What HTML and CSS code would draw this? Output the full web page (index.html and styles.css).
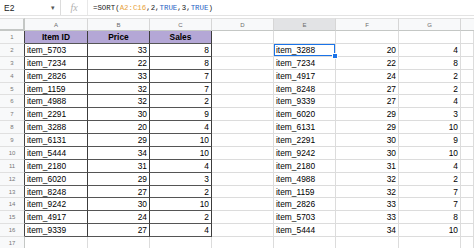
FILE: index.html
```html
<!DOCTYPE html>
<html lang="en">
<head>
    <meta charset="utf-8">
    <link rel="stylesheet" href="styles.css">
</head>
<body>
<div class="fbar">
    <div class="namebox">E2<span class="drop">&#9662;</span></div>
    <div class="fx">fx</div>
    <div class="formula">=SORT(<span class="ref">A2:C16</span>,2,<span class="kw">TRUE</span>,3,<span class="kw">TRUE</span>)</div>
</div>
<div class="sheet">
    <!-- column headers -->
    <div class="corner"></div>
    <div class="ch">A</div><div class="ch">B</div><div class="ch">C</div><div class="ch">D</div>
    <div class="ch on">E</div><div class="ch">F</div><div class="ch">G</div><div class="ch last"></div>

    <div class="rh tb">1</div>
    <div class="c t hd">Item ID</div><div class="c t hd">Price</div><div class="c t hd">Sales</div>
    <div class="c"></div><div class="c"></div><div class="c"></div><div class="c"></div><div class="c"></div>

    <div class="rh tb">2</div>
    <div class="c t">item_5703</div><div class="c t n">33</div><div class="c t n">8</div>
    <div class="c"></div><div class="c sel">item_3288</div><div class="c n">20</div><div class="c n">4</div><div class="c"></div>

    <div class="rh tb">3</div>
    <div class="c t">item_7234</div><div class="c t n">22</div><div class="c t n">8</div>
    <div class="c"></div><div class="c">item_7234</div><div class="c n">22</div><div class="c n">8</div><div class="c"></div>

    <div class="rh tb">4</div>
    <div class="c t">item_2826</div><div class="c t n">33</div><div class="c t n">7</div>
    <div class="c"></div><div class="c">item_4917</div><div class="c n">24</div><div class="c n">2</div><div class="c"></div>

    <div class="rh tb">5</div>
    <div class="c t">item_1159</div><div class="c t n">32</div><div class="c t n">7</div>
    <div class="c"></div><div class="c">item_8248</div><div class="c n">27</div><div class="c n">2</div><div class="c"></div>

    <div class="rh tb">6</div>
    <div class="c t">item_4988</div><div class="c t n">32</div><div class="c t n">2</div>
    <div class="c"></div><div class="c">item_9339</div><div class="c n">27</div><div class="c n">4</div><div class="c"></div>

    <div class="rh tb">7</div>
    <div class="c t">item_2291</div><div class="c t n">30</div><div class="c t n">9</div>
    <div class="c"></div><div class="c">item_6020</div><div class="c n">29</div><div class="c n">3</div><div class="c"></div>

    <div class="rh tb">8</div>
    <div class="c t">item_3288</div><div class="c t n">20</div><div class="c t n">4</div>
    <div class="c"></div><div class="c">item_6131</div><div class="c n">29</div><div class="c n">10</div><div class="c"></div>

    <div class="rh tb">9</div>
    <div class="c t">item_6131</div><div class="c t n">29</div><div class="c t n">10</div>
    <div class="c"></div><div class="c">item_2291</div><div class="c n">30</div><div class="c n">9</div><div class="c"></div>

    <div class="rh tb">10</div>
    <div class="c t">item_5444</div><div class="c t n">34</div><div class="c t n">10</div>
    <div class="c"></div><div class="c">item_9242</div><div class="c n">30</div><div class="c n">10</div><div class="c"></div>

    <div class="rh tb">11</div>
    <div class="c t">item_2180</div><div class="c t n">31</div><div class="c t n">4</div>
    <div class="c"></div><div class="c">item_2180</div><div class="c n">31</div><div class="c n">4</div><div class="c"></div>

    <div class="rh tb">12</div>
    <div class="c t">item_6020</div><div class="c t n">29</div><div class="c t n">3</div>
    <div class="c"></div><div class="c">item_4988</div><div class="c n">32</div><div class="c n">2</div><div class="c"></div>

    <div class="rh tb">13</div>
    <div class="c t">item_8248</div><div class="c t n">27</div><div class="c t n">2</div>
    <div class="c"></div><div class="c">item_1159</div><div class="c n">32</div><div class="c n">7</div><div class="c"></div>

    <div class="rh tb">14</div>
    <div class="c t">item_9242</div><div class="c t n">30</div><div class="c t n">10</div>
    <div class="c"></div><div class="c">item_2826</div><div class="c n">33</div><div class="c n">7</div><div class="c"></div>

    <div class="rh tb">15</div>
    <div class="c t">item_4917</div><div class="c t n">24</div><div class="c t n">2</div>
    <div class="c"></div><div class="c">item_5703</div><div class="c n">33</div><div class="c n">8</div><div class="c"></div>

    <div class="rh tb">16</div>
    <div class="c t">item_9339</div><div class="c t n">27</div><div class="c t n">4</div>
    <div class="c"></div><div class="c">item_5444</div><div class="c n">34</div><div class="c n">10</div><div class="c"></div>

    <div class="rh">17</div>
    <div class="c"></div><div class="c"></div><div class="c"></div>
    <div class="c"></div><div class="c"></div><div class="c"></div><div class="c"></div><div class="c"></div>
</div>
</body>
</html>
```

FILE: styles.css
```css
* {
    margin: 0;
    padding: 0;
    box-sizing: border-box;
}

html, body {
    background: #fff;
}

body {
    width: 474px;
    font-family: "Liberation Sans", Arial, sans-serif;
    color: #000;
}

/* formula bar */
.fbar {
    display: flex;
    height: 16px;
    border-bottom: 1px solid #e3e3e3;
    align-items: stretch;
}

.namebox {
    width: 61px;
    display: flex;
    align-items: center;
    justify-content: space-between;
    padding: 0 5px 0 4px;
    font-size: 8.5px;
    color: #202124;
    border-right: 1px solid #dcdcdc;
}

.drop {
    font-size: 7px;
    color: #555;
}

.fx {
    width: 27px;
    font: italic 10px "Liberation Serif", serif;
    color: #b0b0b0;
    text-align: center;
    line-height: 15px;
    border-right: 1px solid #e8e8e8;
}

.formula {
    padding-left: 5px;
    font-family: "Liberation Mono", monospace;
    font-size: 7.4px;
    line-height: 16px;
    color: #222;
}

.ref {
    color: #e8a33c;
}

.kw {
    color: #1f5fc4;
}

/* grid */
.sheet {
    margin-top: 2px;
    display: grid;
    grid-template-columns: 25px 63px 62px 62px 62px 62px 63px 62px 1fr;
    grid-template-rows: 13px repeat(17, 12.875px);
}

.corner {
    background: #f8f9fa;
    border-right: 2px solid #c4c7c5;
    border-bottom: 2px solid #c4c7c5;
    border-top: 1px solid #e0e0e0;
}

.ch {
    background: #f8f9fa;
    border-top: 1px solid #e0e0e0;
    border-right: 1px solid #d6d6d6;
    border-bottom: 1px solid #c4c7c5;
    font-size: 6px;
    color: #6b6b6b;
    text-align: center;
    line-height: 12px;
}

.ch.on {
    background: #e2e3e5;
}

.ch.last {
    border-right: none;
}

.rh {
    background: #f8f9fa;
    border-right: 1px solid #c4c7c5;
    border-bottom: 1px solid #e0e0e0;
    font-size: 6px;
    color: #777;
    text-align: center;
    line-height: 13px;
}

.rh.tb {
    border-right-color: #444;
}

.c {
    border-right: 1px solid #dcdcdc;
    border-bottom: 1px solid #dcdcdc;
    font-size: 8.4px;
    line-height: 13px;
    padding: 0 2px;
    white-space: nowrap;
}

.c.t {
    border-right-color: #3c3c3c;
    border-bottom-color: #555;
}

.c.n {
    text-align: right;
}

.c.hd {
    background: #b4a7d6;
    font-weight: bold;
    text-align: center;
}

.c.sel {
    position: relative;
    box-shadow: inset 0 0 0 1px #1a73e8;
}

.c.sel::after {
    content: "";
    position: absolute;
    right: -3px;
    bottom: -3px;
    width: 4px;
    height: 4px;
    background: #1a73e8;
    border: 1px solid #fff;
}
```
